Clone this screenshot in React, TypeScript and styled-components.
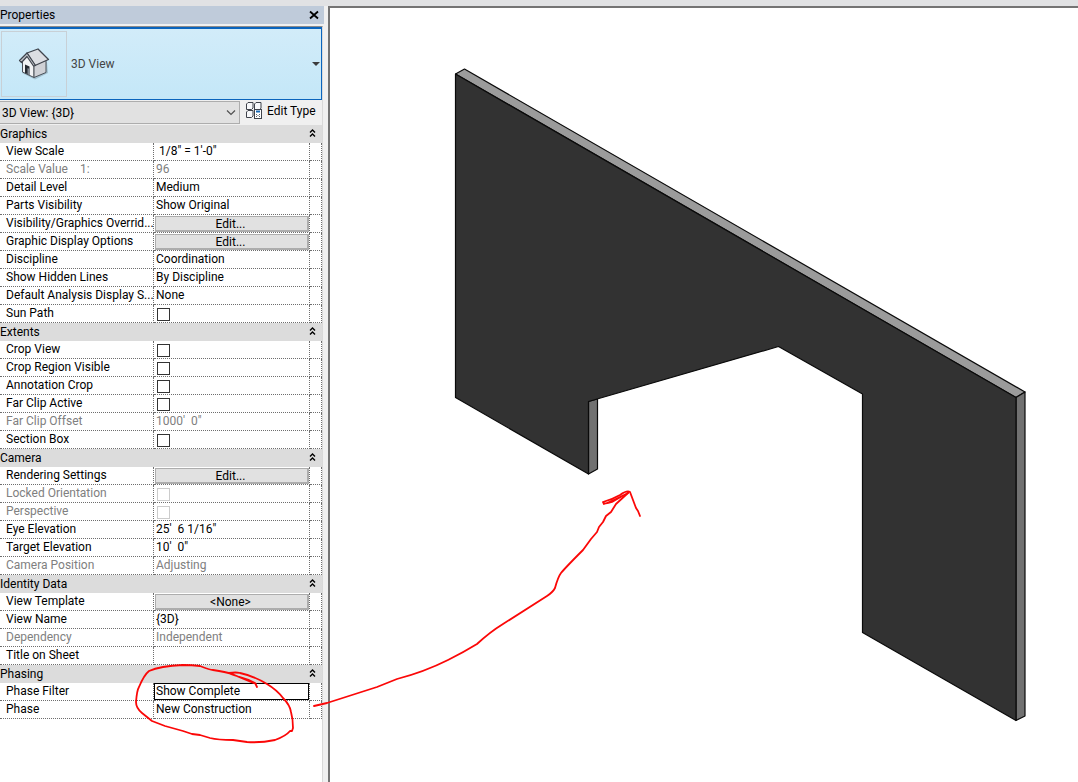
import React, { useState } from "react";
import styled, { createGlobalStyle } from "styled-components";

const GlobalStyle = createGlobalStyle`
  * { box-sizing: border-box; }
  body {
    margin: 0;
    background: #f0f0f0;
    color: #000;
    font: 12px/16px Roboto, "Open Sans", sans-serif;
  }
  button, input, select { font: inherit; color: inherit; }
`;

const Shell = styled.div`
  position: relative;
  display: flex;
  flex-direction: column;
  min-height: 100vh;
  overflow: hidden;
`;

const ToolbarEdge = styled.div`
  height: 6px;
  background: #e1e2e4;
`;

const Workspace = styled.main`
  flex: 1;
  display: flex;
  gap: 4px;
`;

const Palette = styled.aside`
  flex: none;
  width: 324px;
  display: flex;
  flex-direction: column;
`;

const TitleBar = styled.header`
  display: flex;
  align-items: center;
  justify-content: space-between;
  height: 18px;
  padding-right: 5px;
  background: #bfcbda;
`;

const Title = styled.h1`
  margin: 0;
  font-size: 12px;
  font-weight: 400;
  line-height: 18px;
`;

const CloseButton = styled.button`
  display: flex;
  padding: 0;
  border: 0;
  background: none;
`;

const PaletteBody = styled.div`
  flex: 1;
  display: flex;
  flex-direction: column;
  width: 323px;
  margin-top: 2px;
  border-top: 1px solid #8c8c8c;
  border-right: 1px solid #d9d9d9;
`;

const TypeSelector = styled.button`
  display: flex;
  align-items: center;
  gap: 4px;
  width: 100%;
  height: 73px;
  padding: 0 1px 0 0;
  border: 1px solid #0a64bd;
  border-left: 0;
  border-top-width: 2px;
  background: linear-gradient(#d2ecf9, #c4e7f8);
  color: #444;
  text-align: left;
`;

const Thumbnail = styled.span`
  display: flex;
  align-items: center;
  justify-content: center;
  width: 66px;
  height: 66px;
  margin-left: 1px;
  border: 1px solid #c8d0d6;
`;

const TypeName = styled.span`
  flex: 1;
`;

const FilterBar = styled.div`
  display: flex;
  align-items: center;
  gap: 6px;
  height: 25px;
`;

const InstanceField = styled.div`
  position: relative;
  display: flex;
  width: 240px;
`;

const InstanceSelect = styled.select`
  appearance: none;
  width: 100%;
  height: 23px;
  padding: 0 20px 0 2px;
  border: 1px solid #adadad;
  border-left: 0;
  border-radius: 0;
  background: #e1e1e1;
`;

const SelectArrow = styled.svg`
  position: absolute;
  right: 4px;
  top: 9px;
  pointer-events: none;
`;

const EditTypeButton = styled.button`
  display: flex;
  align-items: center;
  gap: 5px;
  padding: 0 0 4px;
  border: 0;
  background: none;
`;

const GridArea = styled.div`
  flex: 1;
  background: #fff;
`;

const PropertyGrid = styled.table`
  width: 322px;
  table-layout: fixed;
  border-spacing: 0;
`;

const GroupCell = styled.th`
  height: 18px;
  padding: 0;
  background: #dcdcdc;
  font-weight: 400;
`;

const GroupToggle = styled.button`
  display: flex;
  align-items: center;
  justify-content: space-between;
  width: 100%;
  height: 18px;
  padding: 0 6px 0 0;
  border: 0;
  background: none;
`;

const cellLine = "1px dotted #6e6e6e";

const NameCell = styled.th<{ $muted?: boolean }>`
  height: 18px;
  padding: 0 0 1px 6px;
  border-right: ${cellLine};
  border-bottom: ${cellLine};
  color: ${(p) => (p.$muted ? "#808080" : "#000")};
  font-weight: 400;
  line-height: 16px;
  text-align: left;
  white-space: pre;
`;

const ValueCell = styled.td`
  height: 18px;
  padding: 0;
  border-right: ${cellLine};
  border-bottom: ${cellLine};
  line-height: 16px;
`;

const ValueBox = styled.div<{ $active?: boolean }>`
  display: flex;
  align-items: flex-start;
  height: 17px;
  outline: ${(p) => (p.$active ? "1px solid #000" : "none")};
  outline-offset: ${(p) => (p.$active ? "-1px" : "0")};
`;

const TextValue = styled.input`
  width: 100%;
  height: 16px;
  padding: 0 0 0 2px;
  border: 0;
  background: none;
  outline: none;
  &:disabled { color: #808080; }
`;

const ChoiceValue = styled.select`
  appearance: none;
  width: 100%;
  height: 16px;
  padding: 0 0 0 2px;
  border: 0;
  background: none;
  outline: none;
  opacity: 1;
  &:disabled { color: #808080; opacity: 1; }
`;

const GridButton = styled.button`
  width: 100%;
  height: 16px;
  margin: 1px 0 0 1px;
  padding: 0 2px 0 0;
  border: 1px solid #adadad;
  border-right-width: 2px;
  border-bottom-width: 2px;
  background: #e1e1e1;
  line-height: 14px;
`;

const CheckValue = styled.input`
  appearance: none;
  width: 13px;
  height: 13px;
  margin: 3px 0 0 3px;
  border: 1px solid #333;
  background: #fff;
  &:checked { background: #333; box-shadow: inset 0 0 0 2px #fff; }
  &:disabled { border-color: #ccc; }
`;

const DrawingArea = styled.section`
  flex: 1;
  min-width: 0;
  overflow: hidden;
  border-top: 2px solid #747474;
  border-left: 2px solid #747474;
  background: #fff;
`;

const Model = styled.svg`
  display: block;
`;

const Markup = styled.svg`
  position: absolute;
  left: 0;
  top: 0;
  pointer-events: none;
`;

type Kind = "text" | "choice" | "button" | "check";
interface Property {
  name: string;
  kind: Kind;
  value?: string;
  muted?: boolean;
  active?: boolean;
}
interface Group {
  title: string;
  items: Property[];
}

const groups: Group[] = [
  {
    title: "Graphics",
    items: [
      { name: "View Scale", kind: "choice", value: "\u00a01/8\" = 1'-0\"" },
      { name: "Scale Value    1:", kind: "text", value: "96", muted: true },
      { name: "Detail Level", kind: "choice", value: "Medium" },
      { name: "Parts Visibility", kind: "choice", value: "Show Original" },
      { name: "Visibility/Graphics Overrid...", kind: "button", value: "Edit..." },
      { name: "Graphic Display Options", kind: "button", value: "Edit..." },
      { name: "Discipline", kind: "choice", value: "Coordination" },
      { name: "Show Hidden Lines", kind: "choice", value: "By Discipline" },
      { name: "Default Analysis Display S...", kind: "choice", value: "None" },
      { name: "Sun Path", kind: "check" },
    ],
  },
  {
    title: "Extents",
    items: [
      { name: "Crop View", kind: "check" },
      { name: "Crop Region Visible", kind: "check" },
      { name: "Annotation Crop", kind: "check" },
      { name: "Far Clip Active", kind: "check" },
      { name: "Far Clip Offset", kind: "text", value: "1000'  0\"", muted: true },
      { name: "Section Box", kind: "check" },
    ],
  },
  {
    title: "Camera",
    items: [
      { name: "Rendering Settings", kind: "button", value: "Edit..." },
      { name: "Locked Orientation", kind: "check", muted: true },
      { name: "Perspective", kind: "check", muted: true },
      { name: "Eye Elevation", kind: "text", value: "25'  6 1/16\"" },
      { name: "Target Elevation", kind: "text", value: "10'  0\"" },
      { name: "Camera Position", kind: "text", value: "Adjusting", muted: true },
    ],
  },
  {
    title: "Identity Data",
    items: [
      { name: "View Template", kind: "button", value: "<None>" },
      { name: "View Name", kind: "text", value: "{3D}" },
      { name: "Dependency", kind: "text", value: "Independent", muted: true },
      { name: "Title on Sheet", kind: "text", value: "" },
    ],
  },
  {
    title: "Phasing",
    items: [
      { name: "Phase Filter", kind: "choice", value: "Show Complete", active: true },
      { name: "Phase", kind: "choice", value: "New Construction" },
    ],
  },
];

function HouseIcon() {
  return (
    <svg width="32" height="32" viewBox="0 0 32 32" aria-hidden="true">
      <path d="M4 14 L4 25 L17 31.500 L30 25 L29 14 Z" fill="#6f8796" opacity="0.4" />
      <path d="M4.500 13 L9 7 L16 16 V29.500 L4.500 24 Z" fill="#f1f2f4" stroke="#4a5059" strokeLinejoin="round" />
      <path d="M16 17 L28 12 V24.500 L16 29.500 Z" fill="#cfd1d6" stroke="#4a5059" strokeLinejoin="round" />
      <path d="M9 5 L20 1 L30.500 11.500 L17 17.500 Z" fill="#dcdee3" stroke="#3f444d" strokeWidth="1.300" strokeLinejoin="round" />
      <path d="M9 5 L1.500 12.500 L3.500 14.500 L9 8.500 L15.500 18 L17.500 17.500 Z" fill="#bfc2c9" stroke="#3f444d" strokeWidth="1.200" strokeLinejoin="round" />
      <path d="M7 16.500 L11.500 18.500 V27 L7 25 Z" fill="#262a31" />
      <path d="M9.500 20 L11.500 21 V27 L9.500 26 Z" fill="#858b95" />
    </svg>
  );
}

function EditTypeIcon() {
  return (
    <svg width="16" height="17" viewBox="0 0 16 17" fill="none" stroke="#3f434b" aria-hidden="true">
      <path d="M.5 2 L2 .5 H7 V6 L5.500 7.500 H.5 Z M8.500 2 L10 .5 H15 V6 L14 7.500 H8.500 Z M.5 10 L2 8.500 H7 V14 L5.500 15.500 H.5 Z" fill="#f7f8fa" />
      <rect x="8.500" y="7.500" width="7" height="9" fill="#fff" />
      <path d="M10 9.500 H14" stroke="#1669b5" strokeWidth="2" />
      <path d="M10 12.500 H11 M13 12.500 H14 M11.500 13.500 H12.500 M10 14.500 H11 M13 14.500 H14" stroke="#5e636b" />
    </svg>
  );
}

function CollapseIcon() {
  return (
    <svg width="7" height="10" viewBox="0 0 7 10" fill="none" stroke="#000" strokeWidth="1.400" aria-hidden="true">
      <path d="M1 3.500 L3.500 1 L6 3.500 M1 7.500 L3.500 5 L6 7.500" />
    </svg>
  );
}

function PropertyValue({ item, id }: { item: Property; id: string }) {
  const [value, setValue] = useState(item.value ?? "");
  const [checked, setChecked] = useState(false);
  if (item.kind === "button") return <GridButton id={id} type="button">{item.value}</GridButton>;
  if (item.kind === "check")
    return (
      <CheckValue id={id} type="checkbox" checked={checked} disabled={item.muted} onChange={(e) => setChecked(e.target.checked)} />
    );
  if (item.kind === "choice")
    return (
      <ChoiceValue id={id} value={value} disabled={item.muted} onChange={(e) => setValue(e.target.value)}>
        <option value={item.value}>{item.value}</option>
      </ChoiceValue>
    );
  return <TextValue id={id} type="text" value={value} disabled={item.muted} onChange={(e) => setValue(e.target.value)} />;
}

function PropertyGroup({ group }: { group: Group }) {
  const [open, setOpen] = useState(true);
  return (
    <tbody>
      <tr>
        <GroupCell colSpan={3} scope="rowgroup">
          <GroupToggle type="button" aria-expanded={open} onClick={() => setOpen(!open)}>
            {group.title}
            <CollapseIcon />
          </GroupToggle>
        </GroupCell>
      </tr>
      {open &&
        group.items.map((item) => {
          const id = item.name.toLowerCase().replace(/[^a-z]+/g, "-");
          return (
            <tr key={id}>
              <NameCell scope="row" $muted={item.muted}>
                <label htmlFor={id}>{item.name}</label>
              </NameCell>
              <ValueCell>
                <ValueBox $active={item.active}>
                  <PropertyValue item={item} id={id} />
                </ValueBox>
              </ValueCell>
              <ValueCell />
            </tr>
          );
        })}
    </tbody>
  );
}

function WallModel() {
  return (
    <Model width="748" height="774" viewBox="330 8 748 774" role="img" aria-label="Wall in 3D view">
      <g stroke="#0a0a0a" strokeWidth="1.200" strokeLinejoin="round">
        <path d="M455.500 74 L464.500 69 L1025 392 L1016 397.500 Z" fill="#9b9b9b" />
        <path d="M1016 397.500 L1025 392 V716 L1016 720.500 Z" fill="#717171" />
        <path d="M588.500 401.500 L597.500 399 V469 L588.500 474 Z" fill="#717171" />
        <path d="M455.500 74 L1016 397.500 V720.500 L862.500 632.500 V394 L778.500 346.500 L588.500 401.500 V474 L455.500 397.500 Z" fill="#323232" />
      </g>
    </Model>
  );
}

function RedMarkup() {
  return (
    <Markup width="1078" height="782" viewBox="0 0 1078 782" fill="none" stroke="#fb0707" strokeWidth="1.800" strokeLinecap="round" strokeLinejoin="round" aria-hidden="true">
      <path d="M257 687 L255 683 Q248 679 240 677 Q229 674 229 673 Q236 672 240 673 Q254 676 267 684 Q277 690 283 698 Q290 705 291 712 Q293 719 293 728 L292 731 L290 731 Q286 736 275 740 Q261 743 247 742 L233 740 Q218 740 210 738 L200 735 L192 734 L183 731 L165 726 L152 721 L142 713 Q136 708 136 702 Q137 690 139 687 Q144 675 149 671 Q160 666 183 665 Q192 665 200 666 Q210 670 213 670 Q226 672 232 674 Q246 680 256 684" />
      <path d="M314 706 L327 703 L377 687 L397 679 Q424 672 448 660 Q464 652 477 644 Q490 632 503 624 L547 596 Q553 592 555 588 Q558 577 561 573 Q566 567 583 550 L591 539 L597 532 L599 527 L603 522 L606 516 L611 512 L616 504 L628 493" />
      <path d="M628 493 Q611 502 604 504 L603 502 Q611 500 620 495 Q627 490 630 492 L633 500 L636 508 L638 511 L640 516 M628 493 Q617 499 612 502 Q606 504 604 503" />
    </Markup>
  );
}

export default function App() {
  return (
    <Shell>
      <GlobalStyle />
      <ToolbarEdge />
      <Workspace>
        <Palette>
          <TitleBar>
            <Title>Properties</Title>
            <CloseButton type="button" aria-label="Close">
              <svg width="10" height="10" viewBox="0 0 10 10" stroke="#000" strokeWidth="1.800" aria-hidden="true">
                <path d="M1 1.500 L9 8.500 M9 1.500 L1 8.500" />
              </svg>
            </CloseButton>
          </TitleBar>
          <PaletteBody>
            <TypeSelector type="button">
              <Thumbnail>
                <HouseIcon />
              </Thumbnail>
              <TypeName>3D View</TypeName>
              <svg width="8" height="4" viewBox="0 0 8 4" aria-hidden="true">
                <path d="M0 0 H8 L4 4 Z" fill="#3c3c3c" />
              </svg>
            </TypeSelector>
            <FilterBar>
              <InstanceField>
                <InstanceSelect aria-label="Instance" defaultValue="3d">
                  <option value="3d">3D View: {"{3D}"}</option>
                </InstanceSelect>
                <SelectArrow width="10" height="6" viewBox="0 0 10 6" fill="none" stroke="#505050" aria-hidden="true">
                  <path d="M1 .5 L5 4.500 L9 .5" strokeWidth="1.200" />
                </SelectArrow>
              </InstanceField>
              <EditTypeButton type="button">
                <EditTypeIcon />
                Edit Type
              </EditTypeButton>
            </FilterBar>
            <GridArea>
              <PropertyGrid aria-label="View properties">
                <colgroup>
                  <col width="154" />
                  <col width="156" />
                  <col width="12" />
                </colgroup>
                {groups.map((group) => (
                  <PropertyGroup key={group.title} group={group} />
                ))}
              </PropertyGrid>
            </GridArea>
          </PaletteBody>
        </Palette>
        <DrawingArea>
          <WallModel />
        </DrawingArea>
      </Workspace>
      <RedMarkup />
    </Shell>
  );
}
